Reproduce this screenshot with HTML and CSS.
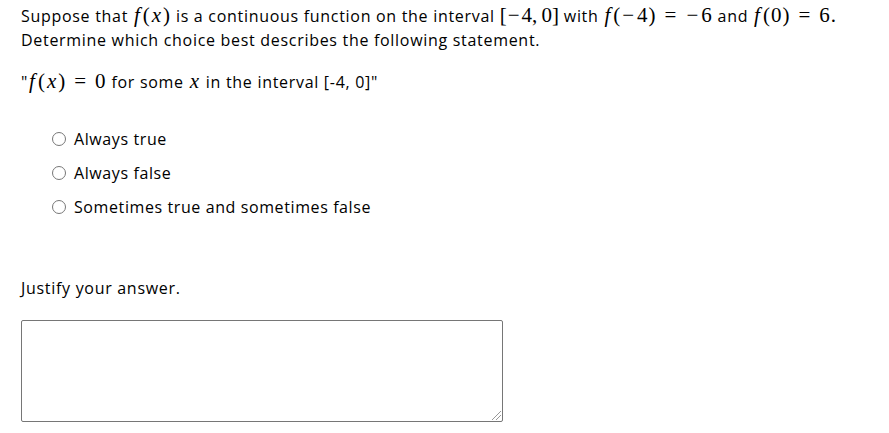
FILE: index.html
```html
<!DOCTYPE html>
<html>
<head>
<meta charset="utf-8">
<link rel="stylesheet" href="styles.css">
</head>
<body>
<div class="page">
  <p class="intro">Suppose that <span class="m"><i class="fn">f</i>(<i class="v">x</i>)</span> is a continuous function on the interval <span class="m tight">[<span class="neg">−</span>4,&thinsp;0]</span> with <span class="m"><i class="fn">f</i>(<span class="neg">−</span>4)<span class="op">=</span><span class="neg">−</span>6</span> and <span class="m"><i class="fn">f</i>(0)<span class="op">=</span>6.</span><br>Determine which choice best describes the following statement.</p>
  <p class="stmt">"<span class="m"><i class="fn">f</i>(<i class="v">x</i>)<span class="op">=</span>0</span> for some <span class="m"><i class="v">x</i></span> in the interval [-4, 0]"</p>
  <div class="choices">
    <label class="choice"><span class="radio"></span>Always true</label>
    <label class="choice"><span class="radio"></span>Always false</label>
    <label class="choice"><span class="radio"></span>Sometimes true and sometimes false</label>
  </div>
  <p class="justify">Justify your answer.</p>
  <div class="box"><span class="grip"></span></div>
</div>
</body>
</html>
```
FILE: styles.css
```css
html, body { margin: 0; padding: 0; background: #fff; }
body { font-family: "Open Sans", "DejaVu Sans", sans-serif; font-size: 16px; letter-spacing: 0.7px; color: #000; }
.page { padding: 4px 0 0 21px; }
p { margin: 0; }
.intro { line-height: 24px; }
.m { font-family: "Liberation Serif", serif; font-size: 21px; line-height: 16px; letter-spacing: 1px; }
.m.tight { letter-spacing: 0; }
.m i { font-style: italic; }
.m .fn { padding: 0 2px 0 1px; }
.m .v { padding: 0 1px; }
.neg { padding: 0 2px 0 1px; }
.op { padding: 0 8px; }
.stmt { margin-top: 18px; line-height: 24px; }
.choices { margin-top: 33px; padding-left: 31px; display: flex; flex-direction: column; gap: 10px; }
.choice { display: flex; align-items: center; height: 24px; letter-spacing: 0.6px; }
.radio { width: 14px; height: 14px; border: 1px solid #777; border-radius: 50%; box-sizing: border-box; margin-right: 8px; }
.justify { margin-top: 57px; line-height: 24px; }
.box { margin-top: 20px; width: 482px; height: 102px; border: 1px solid #767676; border-radius: 2px; box-sizing: border-box; position: relative; }
.grip { position: absolute; right: 1px; bottom: 1px; width: 9px; height: 9px;
  background: linear-gradient(135deg, transparent 45%, #999 45%, #999 52%, transparent 52%, transparent 70%, #999 70%, #999 77%, transparent 77%); }
```
